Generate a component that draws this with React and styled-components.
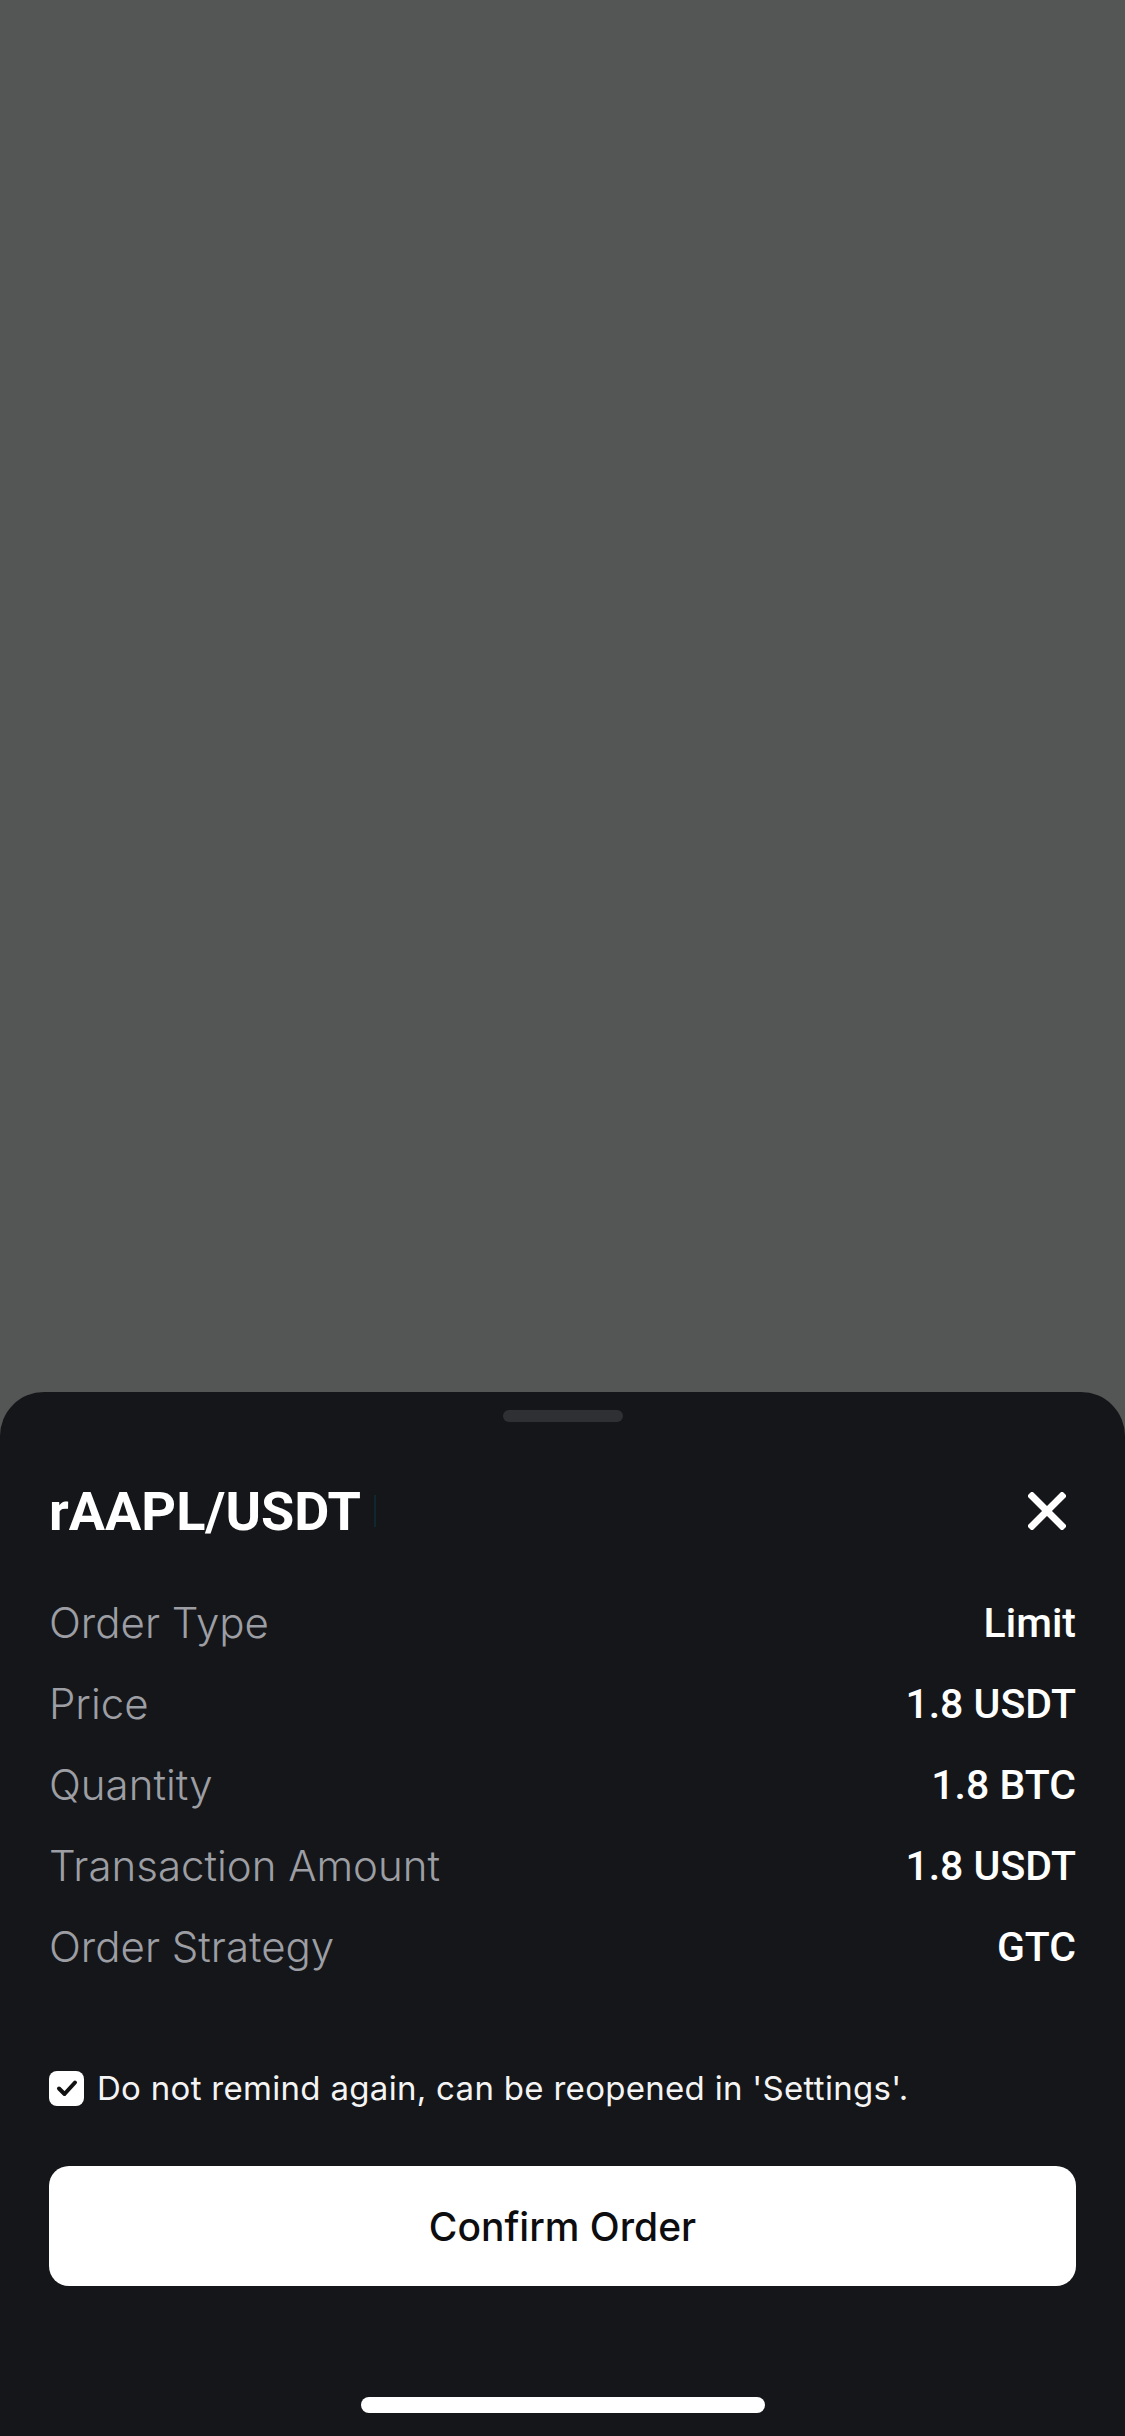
import React from 'react';
import styled, { createGlobalStyle } from 'styled-components';

const GlobalStyle = createGlobalStyle`
    html, body {
        margin: 0;
        padding: 0;
        background: #545655;
    }
    * {
        box-sizing: border-box;
    }
`;

const Screen = styled.div`
    width: 1125px;
    height: 2436px;
    display: flex;
    flex-direction: column;
    background: #545655;
    overflow: hidden;
`;

const Backdrop = styled.div`
    flex: 1;
`;

const Sheet = styled.div`
    height: 1044px;
    background: #151619;
    border-radius: 44px 44px 0 0;
    display: flex;
    flex-direction: column;
    padding: 0 49px 23px;
`;

const Grabber = styled.div`
    align-self: center;
    width: 120px;
    height: 12px;
    margin-top: 18px;
    border-radius: 6px;
    background: #2f3034;
`;

const TitleRow = styled.div`
    height: 80px;
    margin-top: 49px;
    display: flex;
    align-items: center;
    justify-content: space-between;
`;

const Title = styled.h2`
    margin: 0;
    display: flex;
    align-items: center;
    font-family: Roboto, "Liberation Sans", sans-serif;
    font-weight: 700;
    font-size: 54px;
    color: #fff;
`;

const Caret = styled.span`
    display: inline-block;
    width: 2px;
    height: 32px;
    margin-left: 13px;
    background: #0f2830;
`;

const CloseButton = styled.button`
    width: 40px;
    height: 40px;
    margin-right: 9px;
    padding: 0;
    border: none;
    background: none;
    display: flex;
    align-items: center;
    justify-content: center;
`;

const Details = styled.div`
    margin-top: 31px;
    display: flex;
    flex-direction: column;
`;

const Row = styled.div`
    height: 81px;
    display: flex;
    align-items: center;
    justify-content: space-between;
`;

const Label = styled.span`
    font-family: Inter, "Noto Sans", sans-serif;
    font-weight: 300;
    font-size: 42px;
    color: #9c9ea4;
`;

const Value = styled.span`
    font-family: Roboto, "Liberation Sans", sans-serif;
    font-weight: 500;
    font-size: 41px;
    color: #fff;
`;

const Remind = styled.label`
    margin-top: 76px;
    height: 50px;
    display: flex;
    align-items: center;
    gap: 13px;
    font-family: Inter, "Noto Sans", sans-serif;
    font-size: 33px;
    color: #f4f4f5;
    letter-spacing: 0.3px;
`;

const Box = styled.span`
    width: 35px;
    height: 35px;
    border-radius: 8px;
    background: #fff;
    display: flex;
    align-items: center;
    justify-content: center;
    flex-shrink: 0;
`;

const ConfirmButton = styled.button`
    margin-top: 53px;
    height: 120px;
    width: 100%;
    border: none;
    border-radius: 20px;
    background: #fff;
    color: #0d0d0f;
    font-family: Inter, "Noto Sans", sans-serif;
    font-weight: 500;
    font-size: 39px;
`;

const HomeIndicator = styled.div`
    margin-top: auto;
    align-self: center;
    width: 404px;
    height: 16px;
    border-radius: 8px;
    background: #fff;
`;

const rows = [
    ['Order Type', 'Limit'],
    ['Price', '1.8 USDT'],
    ['Quantity', '1.8 BTC'],
    ['Transaction Amount', '1.8 USDT'],
    ['Order Strategy', 'GTC'],
];

export default function App() {
    return (
        <Screen>
            <GlobalStyle />
            <Backdrop />
            <Sheet>
                <Grabber />
                <TitleRow>
                    <Title>
                        rAAPL/USDT
                        <Caret />
                    </Title>
                    <CloseButton aria-label="Close">
                        <svg width="38" height="38" viewBox="0 0 38 38">
                            <path d="M4 4 L34 34 M34 4 L4 34" stroke="#fff" strokeWidth="7" strokeLinecap="square" />
                        </svg>
                    </CloseButton>
                </TitleRow>
                <Details>
                    {rows.map(([label, value]) => (
                        <Row key={label}>
                            <Label>{label}</Label>
                            <Value>{value}</Value>
                        </Row>
                    ))}
                </Details>
                <Remind>
                    <Box>
                        <svg width="22" height="22" viewBox="0 0 22 22">
                            <path d="M3 11.5 L8.5 17 L19 5.5" fill="none" stroke="#111" strokeWidth="4" strokeLinecap="round" strokeLinejoin="round" />
                        </svg>
                    </Box>
                    Do not remind again, can be reopened in 'Settings'.
                </Remind>
                <ConfirmButton>Confirm Order</ConfirmButton>
                <HomeIndicator />
            </Sheet>
        </Screen>
    );
}
